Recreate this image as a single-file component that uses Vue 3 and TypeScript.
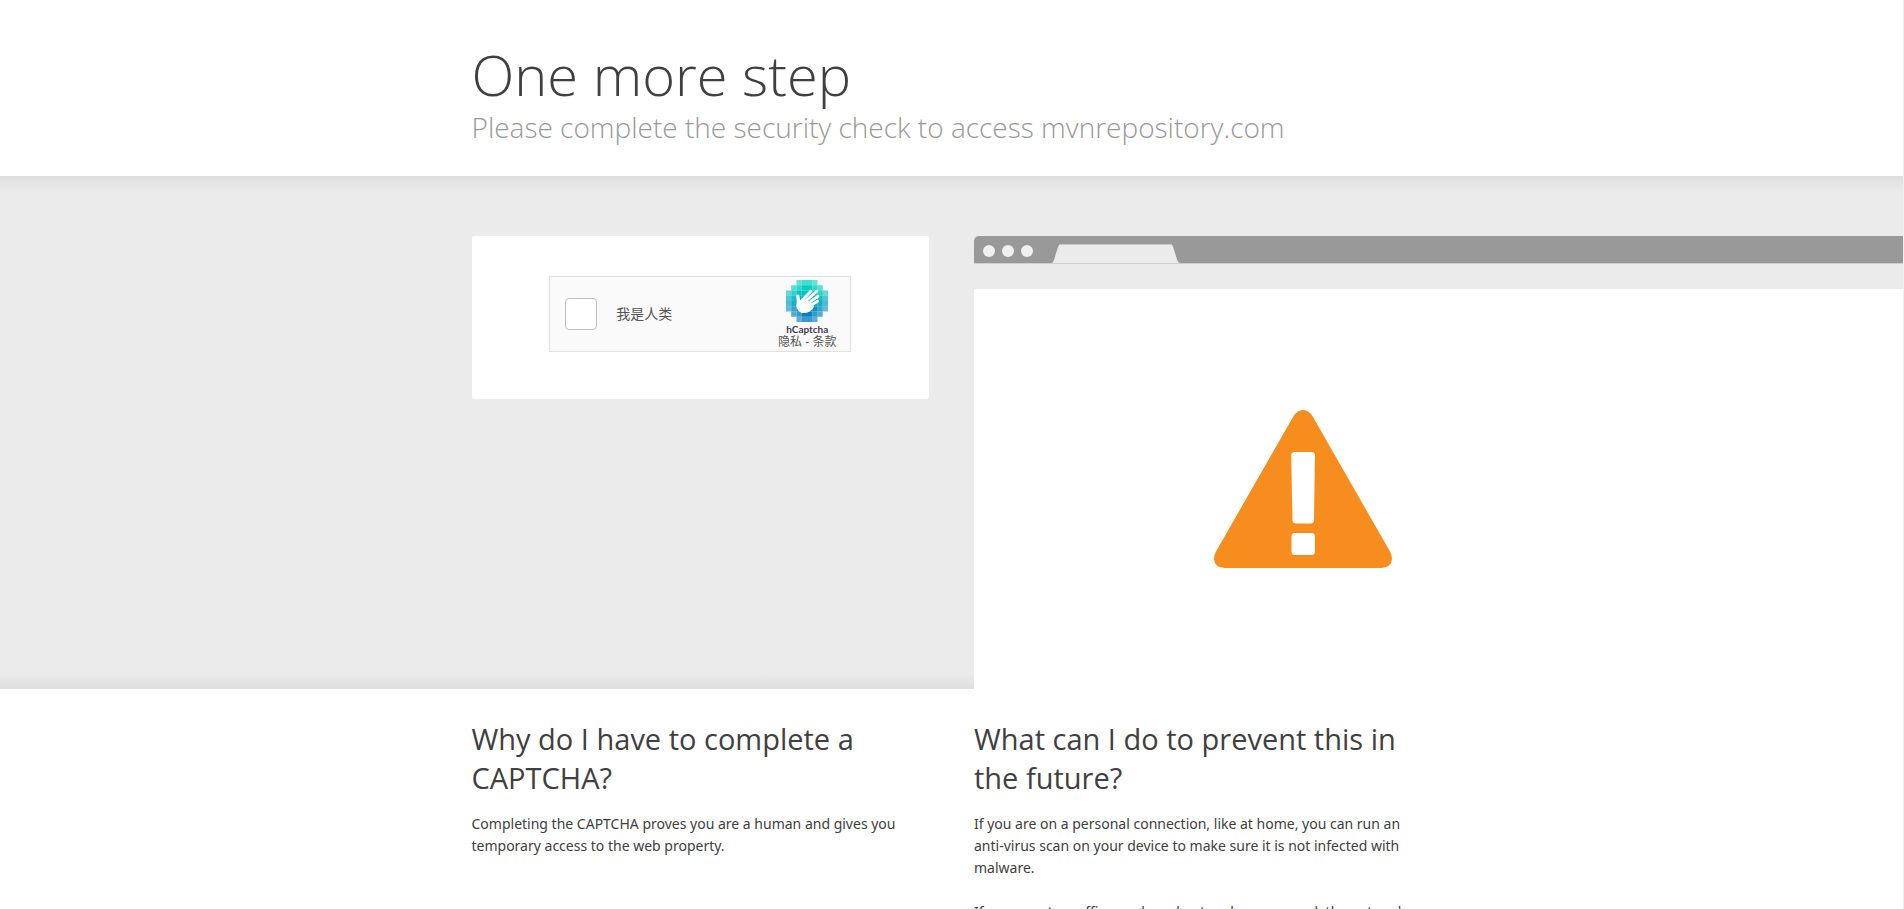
<script setup lang="ts">
interface LogoCell {
  x: number
  y: number
  fill: string
  opacity: number
}

// The emblem is an 8 x 8 grid of squares with its corners cut away.
const rowColours: string[] = ['#00d4bf', '#00cebf', '#00c4bf', '#00b6bf', '#00a4bf', '#0092bf', '#0083bf', '#0074bf']
const rowOpacity: number[][] = [
  [0, 0, 0.6, 0.75, 0.75, 0.6, 0, 0],
  [0, 0.65, 0.8, 1, 1, 0.8, 0.65, 0],
  [0.6, 0.8, 1, 1, 1, 1, 0.8, 0.6],
  [0.7, 0.9, 1, 1, 1, 1, 0.9, 0.7],
  [0.7, 0.9, 1, 1, 1, 1, 0.9, 0.7],
  [0.6, 0.8, 1, 1, 1, 1, 0.8, 0.6],
  [0, 0.65, 0.8, 1, 1, 0.8, 0.65, 0],
  [0, 0, 0.6, 0.75, 0.75, 0.6, 0, 0],
]
const cells: LogoCell[] = rowOpacity.flatMap((row, y) =>
  row
    .map((opacity, x) => ({ x: x * 4, y: y * 4, fill: rowColours[y], opacity }))
    .filter((cell) => cell.opacity > 0),
)
</script>

<template>
  <div class="page">
    <header class="wrap head">
      <h1>One more step</h1>
      <p class="subtitle">Please complete the security check to access mvnrepository.com</p>
    </header>

    <section class="band">
      <div class="wrap columns">
        <div class="column">
          <form class="card">
            <div class="captcha">
              <input id="human" type="checkbox" class="tick" />
              <label for="human" class="human">我是人类</label>
              <div class="brand">
                <svg class="emblem" viewBox="0 0 32 32" aria-hidden="true">
                  <rect
                    v-for="cell in cells"
                    :key="`${cell.x}-${cell.y}`"
                    :x="cell.x"
                    :y="cell.y"
                    width="4"
                    height="4"
                    :fill="cell.fill"
                    :fill-opacity="cell.opacity"
                  />
                  <g fill="none" stroke="#fff" stroke-linecap="round">
                    <path stroke-width="2.2" d="M12.400 15.400 19 8.400M14.500 16.500 23.400 8.600M16.500 18 24.400 12.400M18 20 24 16.200" />
                    <path stroke-width="2.400" d="M9.200 19C9.800 16 9.500 14 9 12.200" />
                  </g>
                  <path
                    fill="#fff"
                    d="M9.500 16.800 11.600 14.600 16 15.200 20 18.200 21.600 20.200C19.400 23.600 16.800 25.200 13.600 25.200 10 25 7.800 22.400 8 19Z"
                  />
                </svg>
                <strong class="name">hCaptcha</strong>
                <span class="legal"><a href="#privacy">隐私</a> - <a href="#terms">条款</a></span>
              </div>
            </div>
          </form>
        </div>

        <div class="column">
          <div class="browser">
            <div class="bar">
              <i class="dot"></i>
              <i class="dot"></i>
              <i class="dot"></i>
              <svg class="tab" viewBox="0 0 130 19" aria-hidden="true">
                <path fill="#ebebeb" d="M0 19Q2 19 2.600 17L7 3Q8 0 10 0H119Q121.300 0 122 2.500L126.500 17Q127.100 19 130 19Z" />
                <path fill="none" stroke="#c8c8c8" d="M9.500.5H120.500" />
              </svg>
            </div>
            <div class="toolbar"></div>
            <div class="screen">
              <svg class="warning" viewBox="0 0 178 158" role="img" aria-label="Warning">
                <path
                  fill="#f78d1f"
                  d="M79 7Q83 0 89 0T99 7L176 141.500Q178 145 178 149 177.500 157.500 167 158H11Q.5 157.500 0 149 0 145 2 141.500Z"
                />
                <path
                  fill="#fff"
                  d="M81 42H97.500Q101 42 101 45.500L100 110Q100 113.500 96.500 113.500H82Q78.500 113.500 78.500 110L77.200 45.500Q77.200 42 81 42Z"
                />
                <rect x="77.500" y="123" width="23.500" height="22" rx="3.500" fill="#fff" />
              </svg>
            </div>
          </div>
        </div>
      </div>
    </section>

    <main class="wrap columns answers">
      <section class="column">
        <h2>Why do I have to complete a CAPTCHA?</h2>
        <p>Completing the CAPTCHA proves you are a human and gives you temporary access to the web property.</p>
      </section>
      <section class="column">
        <h2>What can I do to prevent this in the future?</h2>
        <p>
          If you are on a personal connection, like at home, you can run an anti-virus scan on your device to make
          sure it is not infected with malware.
        </p>
        <p>
          If you are at an office or shared network, you can ask the network administrator to run a scan across the
          network looking for misconfigured or infected devices.
        </p>
      </section>
    </main>
  </div>
</template>

<style>
body {
  margin: 0;
}
</style>

<style scoped>
.page {
  box-sizing: border-box;
  height: 100vh;
  overflow: hidden;
  border-right: 1px solid #f0f0f0;
  background: #fff;
  color: #404040;
  font-family: "Open Sans", "Noto Sans CJK SC", sans-serif;
  font-size: 14px;
  line-height: 22px;
}

.wrap {
  width: min(960px, 100% - 32px);
  margin: 0 auto;
}

.head {
  padding: 40px 0 30px;
}

h1 {
  margin: 0;
  font-size: 56px;
  font-weight: 300;
  line-height: 68px;
}

.subtitle {
  margin: 0;
  color: #999;
  font-size: 28px;
  font-weight: 300;
  line-height: 38px;
}

.band {
  padding-top: 60px;
  background: linear-gradient(#dedede, #ebebeb00 15px), linear-gradient(to top, #dedede, #ebebeb00 15px), #ebebeb;
}

.columns {
  display: grid;
  grid-template-columns: repeat(2, minmax(0, 1fr));
  gap: 45px;
}

.card {
  display: flex;
  justify-content: center;
  padding: 40px 0 47px;
  border-radius: 2px;
  background: #fff;
}

.captcha {
  box-sizing: border-box;
  display: flex;
  align-items: center;
  width: 302px;
  height: 76px;
  padding: 0 11px 0 15px;
  border: 1px solid #e0e0e0;
  background: #fafafa;
}

.tick {
  appearance: none;
  box-sizing: border-box;
  width: 32px;
  height: 32px;
  margin: 0;
  border: 1px solid #bfbfbf;
  border-radius: 4px;
  background: #fff;
}

.human {
  flex: 1;
  margin-left: 19px;
  color: #555;
  font-family: "Liberation Sans", "Noto Sans CJK SC", sans-serif;
}

.brand {
  display: flex;
  flex-direction: column;
  align-items: center;
  width: 64px;
}

.emblem {
  width: 42px;
  height: 42px;
}

.name {
  color: #433c51;
  font-family: Lato, sans-serif;
  font-size: 10px;
  line-height: 14px;
}

.legal {
  color: #555;
  font-family: "Liberation Sans", "Noto Sans CJK SC", sans-serif;
  font-size: 12px;
  line-height: 12px;
  white-space: nowrap;
}

.legal a {
  color: inherit;
  text-decoration: none;
}

.browser {
  width: 100vw;
}

.bar {
  box-sizing: border-box;
  display: flex;
  align-items: center;
  gap: 7px;
  height: 28px;
  padding-left: 9px;
  border-bottom: 1px solid #cfcfcf;
  border-radius: 5px 0 0;
  background: #999;
}

.dot {
  width: 12px;
  height: 12px;
  margin-top: 2px;
  border-radius: 50%;
  background: #f0f0f0;
}

.tab {
  align-self: flex-end;
  width: 130px;
  height: 19px;
  margin-left: 11px;
}

.toolbar {
  height: 25px;
  background: #ebebeb;
}

.screen {
  height: 400px;
  background: #fff;
}

.warning {
  display: block;
  width: 178px;
  height: 158px;
  padding: 121px 0 0 240px;
}

.answers {
  padding-top: 30px;
}

h2 {
  margin: 0 0 16px;
  font-size: 29px;
  font-weight: 400;
  line-height: 39px;
}

.answers p {
  margin: 0 0 22px;
  font-family: "Noto Sans", sans-serif;
}
</style>
